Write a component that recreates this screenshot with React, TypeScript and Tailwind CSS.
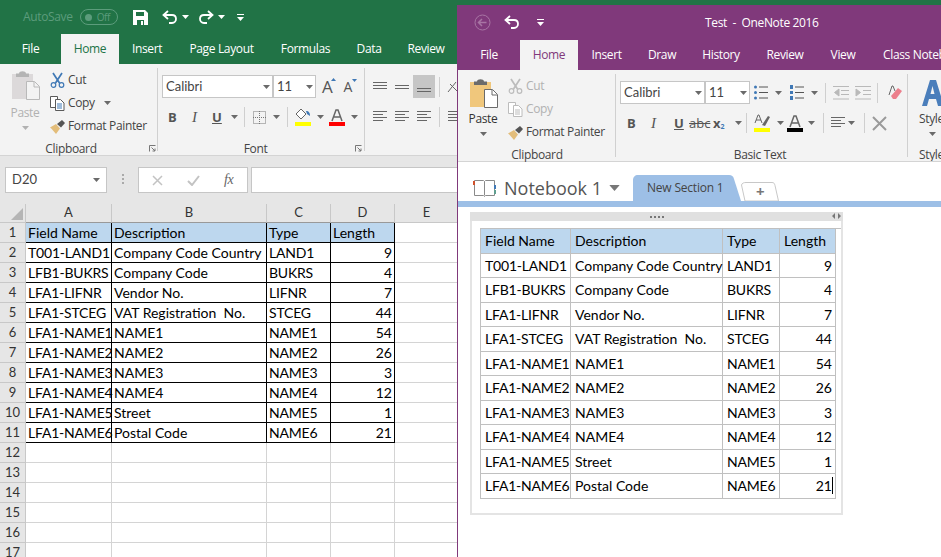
import type { ReactNode } from "react";

const rows = [
  ["T001-LAND1", "Company Code Country", "LAND1", "9"],
  ["LFB1-BUKRS", "Company Code", "BUKRS", "4"],
  ["LFA1-LIFNR", "Vendor No.", "LIFNR", "7"],
  ["LFA1-STCEG", "VAT Registration  No.", "STCEG", "44"],
  ["LFA1-NAME1", "NAME1", "NAME1", "54"],
  ["LFA1-NAME2", "NAME2", "NAME2", "26"],
  ["LFA1-NAME3", "NAME3", "NAME3", "3"],
  ["LFA1-NAME4", "NAME4", "NAME4", "12"],
  ["LFA1-NAME5", "Street", "NAME5", "1"],
  ["LFA1-NAME6", "Postal Code", "NAME6", "21"],
];
const header = ["Field Name", "Description", "Type", "Length"];
// upper case runs wide in Lato, so these columns get a tighter setting
const caps = "text-[13px] tracking-[-0.2px]";

function Caret({ color = "#6a6a6a", className = "" }: { color?: string; className?: string }) {
  return (
    <svg width="7" height="4" viewBox="0 0 7 4" className={`shrink-0 ${className}`}>
      <path d="M0 0h7L3.5 4z" fill={color} />
    </svg>
  );
}

function Undo({ flip = false }: { flip?: boolean }) {
  return (
    <svg width="16" height="15" viewBox="0 0 16 15" fill="none" stroke="#fff" strokeWidth="1.8" className={flip ? "-scale-x-100" : ""}>
      <path d="M6 1 1.5 5 6 9" />
      <path d="M2 5h8c2.5 0 4 1.600 4 3.800S12.500 13 10 13H7" />
    </svg>
  );
}

function QatMore() {
  return (
    <svg width="7" height="7" viewBox="0 0 7 7" fill="#fff">
      <path d="M0 0h7v1H0zM0 3h7L3.500 7z" />
    </svg>
  );
}

function Scissors({ color }: { color: string }) {
  return (
    <svg width="15" height="16" viewBox="0 0 15 16" fill="none" stroke={color} strokeWidth="1.200">
      <path d="M3 1l6.500 10M12 1 5.500 11" strokeWidth="1.700" />
      <circle cx="3.500" cy="13" r="2.300" />
      <circle cx="11.500" cy="13" r="2.300" />
    </svg>
  );
}

function CopyIcon({ color = "#5a5a5a", line = "#3f78b5" }: { color?: string; line?: string }) {
  return (
    <svg width="15" height="15" viewBox="0 0 15 15" fill="#fff" stroke={color}>
      <path d="M.5.500h7v11h-7z" />
      <path d="M5.500 3.500h5l3.500 3.500v7.500H5.500z" />
      <path d="M7 8h5M7 10h5M7 12h5" stroke={line} />
    </svg>
  );
}

function Painter() {
  return (
    <svg width="16" height="15" viewBox="0 0 16 15">
      <path d="M0 8.500 6 5l4 4.500-4 5.500C4 13 2 10 0 8.500z" fill="#e3bd7a" />
      <path d="M7 5l5-4 3 3-4 4.500z" fill="#555" />
    </svg>
  );
}

function PasteIcon({ faded }: { faded?: boolean }) {
  return (
    <svg width="30" height="30" viewBox="0 0 30 30">
      <path d="M1 4h21v25H1z" fill={faded ? "#dcd9da" : "#f0c77c"} />
      <path d="M8 3.500c0-3 7-3 7 0h3v3.500H5V3.500z" fill={faded ? "#b4b4b4" : "#6b6b6b"} />
      <path d="M15.500 11.500h8l5 5v13h-13z" fill={faded ? "#f3f3f3" : "#fff"} stroke={faded ? "#b9b9b9" : "#6b6b6b"} />
      <path d="M23 12v5h5" fill="none" stroke={faded ? "#b9b9b9" : "#6b6b6b"} />
    </svg>
  );
}

function Launcher() {
  return (
    <svg width="7" height="7" viewBox="0 0 7 7" fill="none" stroke="#777">
      <path d="M.5 6.500V.5h6" />
      <path d="M2.500 2.500l3.500 3.500M6 3.500V6H3.500" />
    </svg>
  );
}

function Lines({ w = 14, widths }: { w?: number; widths: number[] }) {
  return (
    <svg width={w} height={widths.length * 3 + 1} viewBox={`0 0 ${w} ${widths.length * 3 + 1}`} stroke="#666">
      {widths.map((l, i) => (
        <path key={i} d={`M0 ${i * 3 + 0.5}h${l}`} />
      ))}
    </svg>
  );
}

function Combo({ text, w }: { text: string; w: string }) {
  return (
    <div className={`${w} h-[23px] bg-white border border-[#c6c6c6] flex items-center justify-between pl-[3px] pr-[2px] text-[13px] tracking-normal text-[#444] font-['Lato',sans-serif]`}>
      {text}
      <Caret />
    </div>
  );
}

function Mark({ children, className = "" }: { children: ReactNode; className?: string }) {
  return <span className={`text-[13px] text-[#555] leading-none tracking-normal ${className}`}>{children}</span>;
}

function Sep({ className = "" }: { className?: string }) {
  return <div className={`w-px h-[20px] bg-[#cfcfcf] shrink-0 ${className}`} />;
}

function ExcelGrid() {
  const cols = ["A", "B", "C", "D", "E"];
  const head = "h-[19px] bg-[#e6e6e6] border-r border-b border-[#c8c8c8] flex items-center justify-center text-[13px] text-[#333]";
  const num = "h-[20px] bg-[#e6e6e6] border-r border-b border-[#c8c8c8] flex items-center justify-center text-[13px] text-[#333]";
  const blank = "h-[20px] border-r border-b border-[#d4d4d4]";
  const cell = "h-[20px] border-r border-b border-black flex items-center px-[2px] whitespace-pre text-[14px] text-black";
  return (
    <div className="grid grid-cols-[26px_86px_155px_64px_64px_64px] font-['Lato',sans-serif]">
      <div className={`${head} items-end justify-end p-[2px]`}>
        <svg width="12" height="12" viewBox="0 0 12 12">
          <path d="M12 0v12H0z" fill="#b5b5b5" />
        </svg>
      </div>
      {cols.map((c) => (
        <div key={c} className={`${head} ${c === "E" ? "" : "border-b-[#999]"}`}>
          {c}
        </div>
      ))}
      <div className={num}>1</div>
      {header.map((h) => (
        <div key={h} className={`${cell} bg-[#bdd7ee]`}>
          {h}
        </div>
      ))}
      <div className={blank} />
      {rows.map((r, i) => (
        <div key={r[0]} className="contents">
          <div className={num}>{i + 2}</div>
          <div className={`${cell} ${caps}`}>{r[0]}</div>
          <div className={cell}>{r[1]}</div>
          <div className={`${cell} ${caps}`}>{r[2]}</div>
          <div className={`${cell} justify-end`}>{r[3]}</div>
          <div className={blank} />
        </div>
      ))}
      {[12, 13, 14, 15, 16, 17].map((n) => (
        <div key={n} className="contents">
          <div className={num}>{n}</div>
          <div className={blank} />
          <div className={blank} />
          <div className={blank} />
          <div className={blank} />
          <div className={blank} />
        </div>
      ))}
    </div>
  );
}

function Excel() {
  const tabs: [string, string][] = [
    ["File", "w-[61px]"],
    ["Home", "w-[58px]"],
    ["Insert", "w-[56px]"],
    ["Page Layout", "w-[93px]"],
    ["Formulas", "w-[75px]"],
    ["Data", "w-[52px]"],
    ["Review", "w-[62px]"],
  ];
  return (
    <div className="w-full h-full flex flex-col bg-white font-['Open_Sans',sans-serif] tracking-[-0.35px]">
      <div className="h-[34px] bg-[#217346] flex items-center pl-[23px] text-white shrink-0">
        <span className="text-[12px] text-[#5c9c7c]">AutoSave</span>
        <div className="ml-[7px] w-[38px] h-[16px] rounded-full border border-[#5c9c7c] flex items-center pl-[4px] gap-[5px]">
          <div className="w-[7px] h-[7px] rounded-full bg-[#5c9c7c]" />
          <span className="text-[10px] leading-none text-[#5c9c7c]">Off</span>
        </div>
        <svg width="15" height="15" viewBox="0 0 15 15" className="ml-[15px]">
          <path d="M0 0h12l3 3v12H0z" fill="#fff" />
          <path d="M3 2h8v4H3zM4 10h7v5H4z" fill="#217346" />
          <path d="M8 11h2v4H8z" fill="#fff" />
        </svg>
        <div className="ml-[14px] flex items-center gap-[4px]"><Undo /><Caret color="#fff" /></div>
        <div className="ml-[9px] flex items-center gap-[4px]"><Undo flip /><Caret color="#fff" /></div>
        <div className="ml-[12px]"><QatMore /></div>
      </div>
      <div className="h-[30px] bg-[#217346] flex shrink-0 text-[12px] text-white">
        {tabs.map(([t, w]) => (
          <div key={t} className={`${w} flex items-center justify-center ${t === "Home" ? "bg-[#f3f3f3] text-[#217346]" : ""}`}>{t}</div>
        ))}
      </div>
      <div className="h-[92px] bg-[#f3f3f3] flex shrink-0 border-b border-[#d4d4d4] text-[12px] text-[#444]">
        <div className="w-[158px] pt-[6px] relative">
          <div className="flex">
            <div className="w-[50px] flex flex-col items-center text-[#b1b1b1]">
              <div className="ml-[2px]"><PasteIcon faded /></div>
              <span className="mt-[5px] leading-[16px]">Paste</span>
              <Caret color="#b1b1b1" className="mt-[5px]" />
            </div>
            <div className="flex flex-col gap-[5px] pt-[1px]">
              <div className="h-[18px] flex items-center gap-[3px]"><Scissors color="#3f78b5" />Cut</div>
              <div className="h-[18px] flex items-center gap-[3px]"><CopyIcon />Copy<Caret className="ml-[6px]" /></div>
              <div className="h-[18px] flex items-center gap-[2px] whitespace-nowrap"><Painter />Format Painter</div>
            </div>
          </div>
          <div className="absolute left-0 right-0 bottom-0 h-[13px] leading-[13px] text-center pr-[16px]">Clipboard</div>
          <div className="absolute right-[2px] bottom-[3px]"><Launcher /></div>
          <div className="absolute right-0 top-[4px] bottom-[4px] w-px bg-[#d0d0d0]" />
        </div>
        <div className="w-[207px] pt-[11px] pl-[4px] relative">
          <div className="flex items-center">
            <Combo text="Calibri" w="w-[111px]" />
            <Combo text="11" w="w-[43px]" />
            <span className="ml-[6px] relative text-[17px] text-[#555] leading-none">A<i className="absolute -right-[4px] top-0"><svg width="5" height="3" viewBox="0 0 5 3"><path d="M0 3h5L2.500 0z" fill="#3f78b5" /></svg></i></span>
            <span className="ml-[11px] relative text-[14px] text-[#555] leading-none">A<i className="absolute -right-[5px] -top-[1px]"><svg width="5" height="3" viewBox="0 0 5 3"><path d="M0 0h5L2.500 3z" fill="#3f78b5" /></svg></i></span>
          </div>
          <div className="flex items-center h-[22px] mt-[8px] pl-[6px]">
            <Mark className="font-bold w-[24px] shrink-0">B</Mark>
            <Mark className="italic font-['Liberation_Serif',serif] text-[15px] w-[20px] shrink-0">I</Mark>
            <Mark className="underline font-bold w-[19px] shrink-0">U</Mark>
            <Caret />
            <Sep className="ml-[6px]" />
            <svg width="13" height="13" viewBox="0 0 13 13" fill="none" stroke="#777" strokeDasharray="1 1" className="ml-[8px]">
              <path d="M.5.500h12v12H.5zM6.500 0v13M0 6.500h13" />
            </svg>
            <Caret className="ml-[7px]" />
            <Sep className="ml-[7px]" />
            <svg width="16" height="18" viewBox="0 0 16 18" className="ml-[7px]">
              <path d="M6 1 1 6l5 5 5-5z" fill="#fff" stroke="#666" />
              <path d="M11 3c3 0 4 2 4 5l-3-2z" fill="#3f78b5" />
              <path d="M0 14h16v4H0z" fill="#ffff00" />
            </svg>
            <Caret className="ml-[6px]" />
            <svg width="16" height="18" viewBox="0 0 16 18" className="ml-[5px]">
              <path d="M3 13 7 2h2l4 11M5 9h6" fill="none" stroke="#666" strokeWidth="1.500" />
              <path d="M0 14h16v4H0z" fill="#ff0000" />
            </svg>
            <Caret className="ml-[6px]" />
          </div>
          <div className="absolute left-0 right-0 bottom-0 h-[13px] leading-[13px] text-center pr-[12px]">Font</div>
          <div className="absolute right-[3px] bottom-[3px]"><Launcher /></div>
          <div className="absolute right-0 top-[4px] bottom-[4px] w-px bg-[#d0d0d0]" />
        </div>
        <div className="flex-1 pt-[11px] pl-[8px] overflow-hidden">
          <div className="flex items-center h-[23px]">
            <div className="w-[22px]"><Lines widths={[14, 14, 14]} /></div>
            <div className="w-[18px] pt-[4px]"><Lines widths={[14, 14]} /></div>
            <div className="w-[22px] h-[23px] bg-[#c6c6c6] flex items-end justify-center pb-[3px]"><Lines widths={[14, 14]} /></div>
            <Sep className="ml-[4px]" />
            <svg width="12" height="14" viewBox="0 0 12 14" fill="none" stroke="#666" className="ml-[7px]">
              <path d="M1 12 9 2M3 4l7 7" />
            </svg>
          </div>
          <div className="flex items-center h-[22px] mt-[8px] gap-[8px]">
            <Lines widths={[14, 10, 14, 10]} />
            <Lines widths={[14, 10, 14, 10]} />
            <Lines widths={[14, 10, 14, 10]} />
            <Sep />
            <Lines widths={[12, 12, 12, 12]} />
          </div>
        </div>
      </div>
      <div className="h-[48px] bg-[#e6e6e6] flex items-start pt-[11px] pl-[5px] shrink-0">
        <div className="w-[102px] h-[26px] bg-white border border-[#c6c6c6] flex items-center justify-between pl-[6px] pr-[6px] text-[13px] tracking-normal text-[#444] font-['Lato',sans-serif]">
          D20
          <Caret />
        </div>
        <div className="ml-[15px] mt-[7px] flex flex-col gap-[2px]">
          <div className="w-[2px] h-[2px] bg-[#aaa]" />
          <div className="w-[2px] h-[2px] bg-[#aaa]" />
          <div className="w-[2px] h-[2px] bg-[#aaa]" />
        </div>
        <div className="ml-[14px] w-[110px] h-[26px] bg-white border border-[#c6c6c6] flex items-center pl-[13px] gap-[24px]">
          <svg width="11" height="11" viewBox="0 0 11 11" stroke="#c3c3c3" strokeWidth="1.500"><path d="M1 1l9 9M10 1l-9 9" /></svg>
          <svg width="13" height="11" viewBox="0 0 13 11" fill="none" stroke="#c3c3c3" strokeWidth="2"><path d="M1 6l4 4 7-9" /></svg>
          <span className="font-['Liberation_Serif',serif] italic text-[14px] text-[#666] leading-none">fx</span>
        </div>
        <div className="ml-[3px] flex-1 h-[26px] bg-white border border-[#c6c6c6]" />
      </div>
      <div className="tracking-normal"><ExcelGrid /></div>
    </div>
  );
}

function NoteTable() {
  const cell = "border-r border-b border-[#c0c0c0] flex items-center pl-[4px] pr-[3px] whitespace-pre text-[14px] text-black";
  return (
    <div className="grid grid-cols-[90px_152px_57px_56px] auto-rows-[24.5px] border-l border-t border-[#c0c0c0] font-['Lato',sans-serif] tracking-normal">
      {header.map((h) => (
        <div key={h} className={`${cell} bg-[#bdd7ee]`}>{h}</div>
      ))}
      {rows.map((r) => (
        <div key={r[0]} className="contents">
          <div className={`${cell} ${caps}`}>{r[0]}</div>
          <div className={cell}>{r[1]}</div>
          <div className={`${cell} ${caps}`}>{r[2]}</div>
          <div className={`${cell} justify-end relative`}>
            {r[3]}
            {r[3] === "21" && <div className="absolute right-[2px] top-[3px] w-px h-[17px] bg-black" />}
          </div>
        </div>
      ))}
    </div>
  );
}

function OneNote() {
  const tabs: [string, string][] = [
    ["File", "w-[62px]"],
    ["Home", "w-[58px]"],
    ["Insert", "w-[57px]"],
    ["Draw", "w-[54px]"],
    ["History", "w-[64px]"],
    ["Review", "w-[64px]"],
    ["View", "w-[52px]"],
    ["Class Notebook", "w-[100px] pl-[14px] justify-start"],
  ];
  return (
    <div className="w-full h-full flex flex-col bg-white border-l border-[#80397b] shadow-[-2px_0_4px_rgba(0,0,0,0.3)] font-['Open_Sans',sans-serif] tracking-[-0.35px]">
      <div className="h-[35px] bg-[#80397b] relative flex items-center pl-[16px] shrink-0 text-white">
        <svg width="17" height="17" viewBox="0 0 17 17" fill="none" stroke="#a875a4">
          <circle cx="8.500" cy="8.500" r="7.500" />
          <path d="M12.500 8.500h-8M8 5 4.500 8.500 8 12" strokeWidth="1.500" />
        </svg>
        <div className="ml-[13px]"><Undo /></div>
        <div className="ml-[17px]"><QatMore /></div>
        <span className="ml-[161px] text-[12px] whitespace-pre">Test  -  OneNote 2016</span>
      </div>
      <div className="h-[30px] bg-[#80397b] flex shrink-0 text-[12px] text-white whitespace-nowrap overflow-hidden">
        {tabs.map(([t, w]) => (
          <div key={t} className={`${w} shrink-0 flex items-center justify-center ${t === "Home" ? "bg-[#f3f3f3] text-[#80397b]" : ""}`}>{t}</div>
        ))}
      </div>
      <div className="h-[92px] bg-[#f3f3f3] flex shrink-0 border-b border-[#d4d4d4] text-[12px] text-[#444]">
        <div className="w-[158px] pt-[6px] relative shrink-0">
          <div className="flex">
            <div className="w-[50px] flex flex-col items-center text-[#333]">
              <div className="ml-[2px] mt-[2px]"><PasteIcon /></div>
              <span className="mt-[3px] leading-[16px]">Paste</span>
              <Caret className="mt-[5px]" />
            </div>
            <div className="flex flex-col gap-[5px] pt-[1px] text-[#b1b1b1]">
              <div className="h-[18px] flex items-center gap-[3px]"><Scissors color="#bcbcbc" />Cut</div>
              <div className="h-[18px] flex items-center gap-[3px]"><CopyIcon color="#bcbcbc" line="#bcbcbc" />Copy</div>
              <div className="h-[18px] flex items-center gap-[2px] whitespace-nowrap text-[#444]"><Painter />Format Painter</div>
            </div>
          </div>
          <div className="absolute left-0 right-0 bottom-0 h-[13px] leading-[13px] text-center">Clipboard</div>
          <div className="absolute right-0 top-[4px] bottom-[4px] w-px bg-[#d0d0d0]" />
        </div>
        <div className="w-[292px] pt-[11px] pl-[4px] relative shrink-0">
          <div className="flex items-center">
            <Combo text="Calibri" w="w-[85px]" />
            <Combo text="11" w="w-[45px]" />
            <svg width="14" height="15" viewBox="0 0 14 15" className="ml-[4px]" fill="#3f78b5" stroke="#555">
              <circle cx="1.500" cy="2" r="1.500" stroke="none" />
              <circle cx="1.500" cy="7.500" r="1.500" stroke="none" />
              <circle cx="1.500" cy="13" r="1.500" stroke="none" />
              <path d="M5 2h9M5 7.500h9M5 13h9" />
            </svg>
            <Caret className="ml-[7px]" />
            <svg width="14" height="15" viewBox="0 0 14 15" className="ml-[8px]" fill="#3f78b5" stroke="#555">
              <path d="M0 0h3v4H0zM0 6h3v3H0zM0 11h3v4H0z" stroke="none" />
              <path d="M5 2h9M5 7.500h9M5 13h9" />
            </svg>
            <Caret className="ml-[7px]" />
            <Sep className="ml-[7px]" />
            <svg width="16" height="14" viewBox="0 0 16 14" fill="#b9b9b9" stroke="#b9b9b9" className="ml-[7px]">
              <path d="M0 .5h16M8 4.500h8M8 8.500h8M0 13h16M6 3 1.500 6.500 6 10z" />
            </svg>
            <svg width="16" height="14" viewBox="0 0 16 14" fill="#b9b9b9" stroke="#b9b9b9" className="ml-[6px]">
              <path d="M0 .5h16M8 4.500h8M8 8.500h8M0 13h16M1 3l4.500 3.500L1 10z" />
            </svg>
            <Sep className="ml-[6px]" />
            <svg width="15" height="15" viewBox="0 0 15 15" className="ml-[9px]">
              <path d="M2 10 5 1h1l2 5" fill="none" stroke="#666" />
              <path d="M4 11l7-8 4 3-6 8H6z" fill="#ec7f8c" />
            </svg>
          </div>
          <div className="flex items-center h-[22px] mt-[8px] pl-[7px]">
            <Mark className="font-bold w-[24px] shrink-0">B</Mark>
            <Mark className="italic font-['Liberation_Serif',serif] text-[15px] w-[23px] shrink-0">I</Mark>
            <Mark className="underline font-bold w-[15px] shrink-0">U</Mark>
            <Mark className="line-through w-[24px] shrink-0 text-[12px]">abc</Mark>
            <Mark className="font-bold w-[14px] shrink-0">x<sub className="text-[#3f78b5] text-[7px]">2</sub></Mark>
            <Caret className="ml-[8px]" />
            <Sep className="ml-[4px]" />
            <svg width="16" height="18" viewBox="0 0 16 18" className="ml-[7px]">
              <path d="M1 9 4 1h1l3 8M2 6h5" fill="none" stroke="#666" />
              <path d="M8 11 14 2l2 1-5 9z" fill="#666" />
              <path d="M0 14h16v4H0z" fill="#ffff00" />
            </svg>
            <Caret className="ml-[7px]" />
            <svg width="16" height="18" viewBox="0 0 16 18" className="ml-[3px]">
              <path d="M3 13 7 2h2l4 11M5 9h6" fill="none" stroke="#666" strokeWidth="1.500" />
              <path d="M0 14h16v4H0z" fill="#000" />
            </svg>
            <Caret className="ml-[5px]" />
            <Sep className="ml-[8px]" />
            <div className="ml-[7px]"><Lines widths={[14, 10, 14, 10]} /></div>
            <Caret className="ml-[3px]" />
            <Sep className="ml-[9px]" />
            <svg width="15" height="15" viewBox="0 0 15 15" stroke="#9a9a9a" strokeWidth="2" className="ml-[7px] shrink-0"><path d="M1 1l13 13M14 1 1 14" /></svg>
          </div>
          <div className="absolute left-0 right-0 bottom-0 h-[13px] leading-[13px] text-center pr-[4px]">Basic Text</div>
          <div className="absolute right-0 top-[4px] bottom-[4px] w-px bg-[#d0d0d0]" />
        </div>
        <div className="flex-1 relative flex flex-col items-start pl-[11px] pt-[8px] overflow-hidden whitespace-nowrap">
          <svg width="24" height="30" viewBox="0 0 24 30" className="ml-[2px]">
            <path d="M1 28 9 2h6l8 26h-6l-2-7H8l-2 7zM9.500 16h4L11.500 8z" fill="#4a7ebb" />
          </svg>
          <span className="mt-[3px] leading-[16px]">Styles</span>
          <Caret className="mt-[5px] ml-[10px]" />
          <div className="absolute left-[11px] bottom-0 h-[13px] leading-[13px]">Styles</div>
        </div>
      </div>
      <div className="h-[39px] bg-white flex items-end shrink-0 pl-[15px]">
        <div className="flex items-center h-[26px] text-[#555] tracking-normal">
          <svg width="24" height="19" viewBox="0 0 24 19" fill="none" stroke="#8a8a8a">
            <path d="M1.500 1.500h9l1 1 1-1h9v15h-9l-1 1-1-1h-9zM11.500 2.500v14" />
            <path d="M0 2h2v4H0z" fill="#d0512b" stroke="none" />
            <path d="M21 6h2v4h-2z" fill="#3f78b5" stroke="none" />
            <path d="M21 11h2v4h-2z" fill="#5f9e8f" stroke="none" />
          </svg>
          <span className="ml-[7px] text-[18px] leading-none">Notebook 1</span>
          <Caret color="#777" className="ml-[9px] scale-150" />
        </div>
        <div className="ml-[15px] relative w-[109px] h-[26px] flex items-center pl-[14px] text-[12px] text-[#444] tracking-[-0.2px]">
          <svg width="109" height="26" viewBox="0 0 109 26" className="absolute inset-0">
            <path d="M0 26V5c0-3 2-5 5-5h91c3 0 4 1 5 4l7 22z" fill="#9dbfe6" />
          </svg>
          <span className="relative">New Section 1</span>
        </div>
        <div className="-ml-[1px] relative w-[38px] h-[19px] flex items-center justify-center">
          <svg width="38" height="19" viewBox="0 0 38 19" className="absolute inset-0">
            <path d="M.5 3C1 1 3 .5 5 .5h26c2 0 2.500 1 3 3l3.500 15.500H4z" fill="#fff" stroke="#c8c8c8" />
          </svg>
          <span className="relative text-[15px] font-bold text-[#777] leading-none">+</span>
        </div>
      </div>
      <div className="h-[6px] bg-[#9dbfe6] shrink-0" />
      <div className="flex-1 bg-white pl-[12px] pt-[5px]">
        <div className="w-[373px] border-2 border-t-0 border-[#e4e4e4]">
          <div className="h-[9px] -mx-[2px] bg-[#e0e0e0] relative flex items-center justify-center">
            <div className="flex gap-[2px]">
              <div className="w-[2px] h-[2px] bg-[#777]" />
              <div className="w-[2px] h-[2px] bg-[#777]" />
              <div className="w-[2px] h-[2px] bg-[#777]" />
              <div className="w-[2px] h-[2px] bg-[#777]" />
            </div>
            <svg width="9" height="6" viewBox="0 0 9 6" fill="#777" className="absolute right-[2px] top-[1px]">
              <path d="M3 0v6L0 3zM6 0v6l3-3z" />
            </svg>
          </div>
          <div className="pl-[8px] pt-[7px] pb-[14px]">
            <NoteTable />
          </div>
        </div>
      </div>
    </div>
  );
}

export default function App() {
  return (
    <div className="relative w-[941px] h-[557px] overflow-hidden bg-white">
      <Excel />
      <div className="absolute left-[457px] top-[5px] w-[484px] h-[552px] overflow-hidden">
        <OneNote />
      </div>
    </div>
  );
}
